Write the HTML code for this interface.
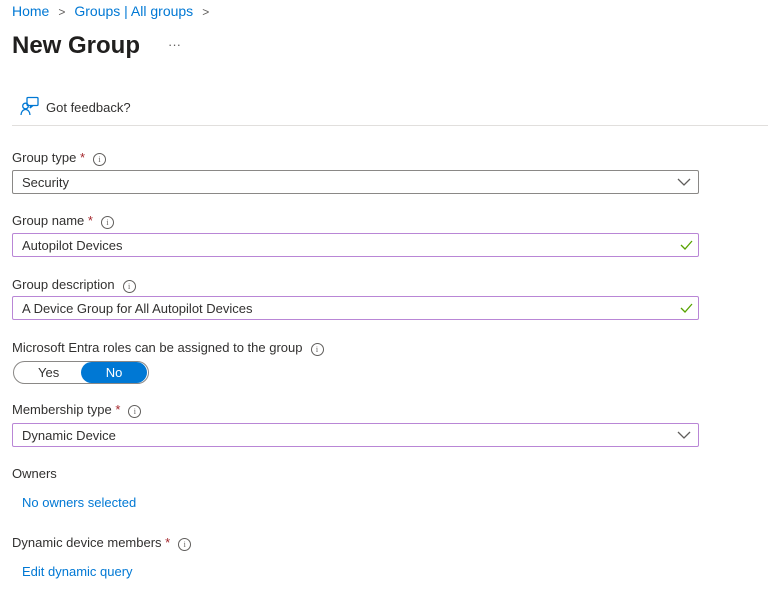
<!DOCTYPE html>
<html><head><style>
body{margin:0;width:768px;height:590px;background:#fff;font-family:"Liberation Sans",sans-serif;color:#323130;position:relative;overflow:hidden}
.a{position:absolute;white-space:nowrap}
.lbl{font-size:13px;color:#323130}
.req{color:#a4262c}
.info{display:inline-block;width:11px;height:11px;border:1px solid #605e5c;border-radius:50%;font-size:8px;line-height:11px;text-align:center;color:#605e5c;vertical-align:0px;margin-left:8px;font-family:"Liberation Serif",serif}
.box{position:absolute;left:12px;height:22px;border:1px solid #8a8886;border-radius:2px;font-size:13px;line-height:24px;padding-left:9px;box-sizing:content-box;width:676px}
.p{border-color:#b986d6}
.link{color:#0078d4;font-size:13px}
.ch{color:#605e5c;margin:0 9px;font-size:12px}
</style></head><body>
<div class="a" style="left:12px;top:3px;font-size:14px;color:#0078d4">Home<span class="ch">&gt;</span>Groups | All groups<span class="ch">&gt;</span></div>
<div class="a" style="left:12px;top:32px;font-size:24px;font-weight:bold;color:#201f1e">New Group</div>
<div class="a" style="left:168px;top:37px;font-size:13px;color:#605e5c">···</div>
<svg class="a" style="left:20px;top:96px" width="20" height="20" viewBox="0 0 20 20" fill="none" stroke="#0078d4" stroke-width="1.3"><rect x="7" y="1.5" width="11" height="8" rx="1"/><path d="M11 9.5l-1 2.5 3-2.5"/><circle cx="5.5" cy="10" r="2.8"/><path d="M1 19c0-3 2-5.5 4.5-5.5S10 16 10 19"/></svg>
<div class="a" style="left:46px;top:100px;font-size:13px">Got feedback?</div>
<div class="a" style="left:12px;top:125px;width:756px;height:1px;background:#e1dfdd"></div>

<div class="a lbl" style="left:12px;top:150px">Group type <span class="req">*</span><span class="info">i</span></div>
<div class="box" style="top:170px">Security</div>
<svg class="a" style="left:677px;top:178px" width="14" height="9"><path d="M1 1l6 6 6-6" fill="none" stroke="#605e5c" stroke-width="1.3"/></svg>

<div class="a lbl" style="left:12px;top:213px">Group name <span class="req">*</span><span class="info">i</span></div>
<div class="box p" style="top:233px">Autopilot Devices</div>
<svg class="a" style="left:680px;top:240px" width="13" height="10"><path d="M1 5l4 4 7-8" fill="none" stroke="#57a300" stroke-width="1.3"/></svg>

<div class="a lbl" style="left:12px;top:277px">Group description<span class="info">i</span></div>
<div class="box p" style="top:296px">A Device Group for All Autopilot Devices</div>
<svg class="a" style="left:680px;top:303px" width="13" height="10"><path d="M1 5l4 4 7-8" fill="none" stroke="#57a300" stroke-width="1.3"/></svg>

<div class="a lbl" style="left:12px;top:340px">Microsoft Entra roles can be assigned to the group<span class="info">i</span></div>
<div class="a" style="left:13px;top:361px;width:134px;height:21px;border:1px solid #8a8886;border-radius:12px"></div>
<div class="a" style="left:38px;top:365px;font-size:13px">Yes</div>
<div class="a" style="left:81px;top:362px;width:66px;height:21px;background:#0078d4;border-radius:11px;color:#fff;font-size:13px;line-height:21px;text-align:center">No</div>

<div class="a lbl" style="left:12px;top:402px">Membership type <span class="req">*</span><span class="info">i</span></div>
<div class="box p" style="top:423px">Dynamic Device</div>
<svg class="a" style="left:677px;top:431px" width="14" height="9"><path d="M1 1l6 6 6-6" fill="none" stroke="#605e5c" stroke-width="1.3"/></svg>

<div class="a lbl" style="left:12px;top:466px">Owners</div>
<div class="a link" style="left:22px;top:495px">No owners selected</div>
<div class="a lbl" style="left:12px;top:535px">Dynamic device members <span class="req">*</span><span class="info">i</span></div>
<div class="a link" style="left:22px;top:564px">Edit dynamic query</div>
</body></html>
